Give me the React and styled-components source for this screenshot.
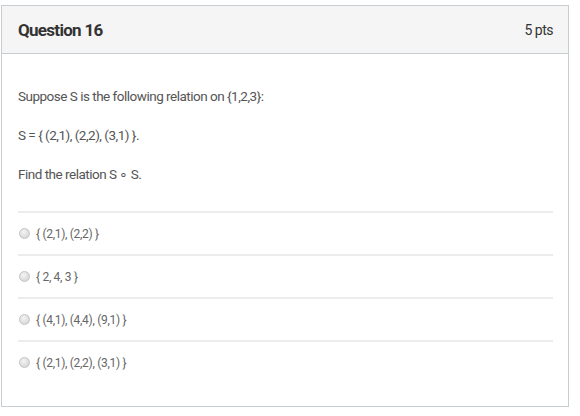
import React from 'react'
import styled, { createGlobalStyle } from 'styled-components'

const GlobalStyle = createGlobalStyle`
  body {
    margin: 0;
    background: #fff;
    font-family: 'Roboto', 'Liberation Sans', sans-serif;
  }
`

const Page = styled.div`
  padding: 5px 11px 0 1px;
`

const Card = styled.section`
  border: 1px solid #c7cdd1;
  background: #fff;
  height: 402px;
  box-sizing: border-box;
`

const Header = styled.header`
  display: flex;
  align-items: center;
  justify-content: space-between;
  height: 47px;
  padding: 0 15px 0 16px;
  background: #f5f5f5;
  border-bottom: 1px solid #c7cdd1;
`

const Title = styled.h2`
  margin: 0;
  font-size: 17px;
  font-weight: 700;
  color: #333;
  letter-spacing: -0.7px;
`

const Points = styled.span`
  font-size: 14px;
  color: #333;
  letter-spacing: -0.5px;
`

const Body = styled.div`
  padding: 32px 15px 0 16px;
`

const Text = styled.p`
  margin: 0 0 19px;
  font-size: 13.5px;
  line-height: 20px;
  color: #555;
  letter-spacing: -0.5px;
`

const Answers = styled.ul`
  list-style: none;
  margin: 27px 0 0;
  padding: 0;
`

const Answer = styled.li`
  display: flex;
  align-items: center;
  gap: 6px;
  height: 41px;
  padding-left: 1px;
  border-top: 2px solid #ececec;
  font-size: 12px;
  color: #666;
  letter-spacing: -0.3px;
`

const Radio = styled.span`
  width: 9px;
  height: 9px;
  border-radius: 50%;
  border: 1px solid #c4c4c4;
  background: radial-gradient(circle at 40% 35%, #f4f4f4, #cfcfcf);
  flex: none;
`

const answers = [
  '{ (2,1), (2,2) }',
  '{ 2, 4, 3 }',
  '{ (4,1), (4,4), (9,1) }',
  '{ (2,1), (2,2), (3,1) }',
]

export default function App() {
  return (
    <Page>
      <GlobalStyle />
      <Card>
        <Header>
          <Title>Question 16</Title>
          <Points>5 pts</Points>
        </Header>
        <Body>
          <Text>Suppose S is the following relation on {'{1,2,3}'}:</Text>
          <Text>S = {'{ (2,1), (2,2), (3,1) }'}.</Text>
          <Text>Find the relation S ∘ S.</Text>
          <Answers>
            {answers.map((a) => (
              <Answer key={a}>
                <Radio />
                {a}
              </Answer>
            ))}
          </Answers>
        </Body>
      </Card>
    </Page>
  )
}
